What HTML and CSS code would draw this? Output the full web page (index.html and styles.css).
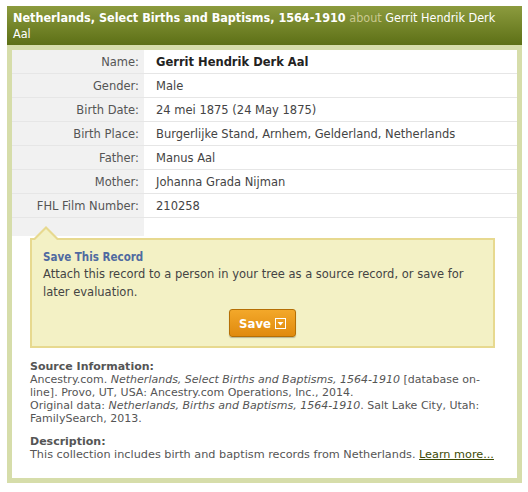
FILE: index.html
```html
<!DOCTYPE html>
<html>
<head>
<meta charset="utf-8">
<link rel="stylesheet" href="styles.css">
</head>
<body>
<div class="record">
  <div class="header"><span class="coll">Netherlands, Select Births and Baptisms, 1564-1910</span> <span class="about">about</span> Gerrit Hendrik Derk Aal</div>
  <div class="inner">
    <div class="table">
      <div class="row"><div class="lbl">Name:</div><div class="val name">Gerrit Hendrik Derk Aal</div></div>
      <div class="row"><div class="lbl">Gender:</div><div class="val">Male</div></div>
      <div class="row"><div class="lbl">Birth Date:</div><div class="val">24 mei 1875 (24 May 1875)</div></div>
      <div class="row"><div class="lbl">Birth Place:</div><div class="val">Burgerlijke Stand, Arnhem, Gelderland, Netherlands</div></div>
      <div class="row"><div class="lbl">Father:</div><div class="val">Manus Aal</div></div>
      <div class="row"><div class="lbl">Mother:</div><div class="val">Johanna Grada Nijman</div></div>
      <div class="row"><div class="lbl">FHL Film Number:</div><div class="val">210258</div></div>
      <div class="row empty"><div class="lbl"></div><div class="val"></div></div>
    </div>
    <div class="callout">
      <div class="ctitle">Save This Record</div>
      <div class="ctext">Attach this record to a person in your tree as a source record, or save for later evaluation.</div>
      <div class="btnwrap"><button class="save">Save <svg class="dd" width="11" height="11" viewBox="0 0 11 11"><rect x="0.5" y="0.5" width="10" height="10" fill="none" stroke="#fff" stroke-width="1"/><path d="M2.5 4 L8.5 4 L5.5 7.5 Z" fill="#fff"/></svg></button></div>
    </div>
    <div class="info">
      <div class="ihead">Source Information:</div>
      <div class="itext">Ancestry.com. <i>Netherlands, Select Births and Baptisms, 1564-1910</i> [database on-line]. Provo, UT, USA: Ancestry.com Operations, Inc., 2014.<br>Original data: <i>Netherlands, Births and Baptisms, 1564-1910</i>. Salt Lake City, Utah: FamilySearch, 2013.</div>
      <div class="ihead desc">Description:</div>
      <div class="itext dtext">This collection includes birth and baptism records from Netherlands. <a href="#" class="more">Learn more...</a></div>
    </div>
  </div>
</div>
</body>
</html>
```

FILE: styles.css
```css
html, body { margin: 0; padding: 0; background: #fff; }
body { padding: 6px 6px 0 7px; font-family: "DejaVu Sans", Verdana, sans-serif; }
.record { width: 515px; background: #d6ddaa; padding-bottom: 5px; }
.header {
  background: linear-gradient(#8c9b3e, #5d7016);
  color: #fff;
  font-family: "DejaVu Sans Condensed", Tahoma, sans-serif;
  font-size: 12.5px;
  line-height: 16px;
  padding: 4px 6px 3px 6px;
  height: 32px;
}
.header .coll { font-weight: bold; }
.header .about { color: #c9c88e; }
.inner { background: #fff; margin: 5px 5px 0 5px; padding-bottom: 17px; }
.table { display: flex; flex-direction: column; }
.row { display: flex; height: 24px; }
.lbl, .val {
  height: 24px; box-sizing: border-box; padding-top: 2px; line-height: 21px;
  font-size: 11.5px; border-bottom: 1px solid #e6e6e6;
}
.lbl {
  width: 132px; flex: none; background: #f1f1f1; text-align: right;
  padding-right: 5px; color: #555;
}
.val { flex: 1; padding-left: 12px; color: #444; }
.val.name { font-weight: bold; color: #222; }
.row.empty { height: 18px; }
.row.empty .lbl, .row.empty .val { border-bottom: none; height: 18px; }
.callout {
  position: relative;
  margin: 2px 22px 0 18px;
  background: #f3f1c5;
  border: 2px solid #e7d98f;
  padding: 9px 11px 9px 11px;
}
.callout::before {
  content: ""; position: absolute; left: 0px; top: -14px;
  border-left: 14px solid transparent; border-right: 14px solid transparent;
  border-bottom: 14px solid #e7d98f;
}
.callout::after {
  content: ""; position: absolute; left: 2px; top: -11px;
  border-left: 12px solid transparent; border-right: 12px solid transparent;
  border-bottom: 12px solid #f3f1c5;
}
.ctitle { font-family: "DejaVu Sans Condensed", Tahoma, sans-serif; font-weight: bold; color: #4f6aa0; font-size: 11.5px; line-height: 16px; }
.ctext { font-size: 11.5px; color: #444; line-height: 18px; }
.btnwrap { display: flex; justify-content: center; margin-top: 8px; }
.save {
  width: 67px; height: 28px; border: 1px solid #b56f05; border-radius: 3px;
  background: linear-gradient(#f3a82a, #e08a0e);
  color: #fff; font-family: "DejaVu Sans Condensed", Tahoma, sans-serif; font-weight: bold; font-size: 13px;
  display: flex; align-items: center; justify-content: center; gap: 4px; padding: 0;
  box-shadow: 0 1px 1px rgba(0,0,0,0.25);
}
.info { padding: 12px 18px 0 18px; font-size: 11px; color: #555; line-height: 13px; }
.ihead { font-weight: bold; font-size: 11px; line-height: 13px; }
.desc { margin-top: 10px; }
.dtext { font-size: 11.25px; }
.more { color: #3d4a05; }
```
